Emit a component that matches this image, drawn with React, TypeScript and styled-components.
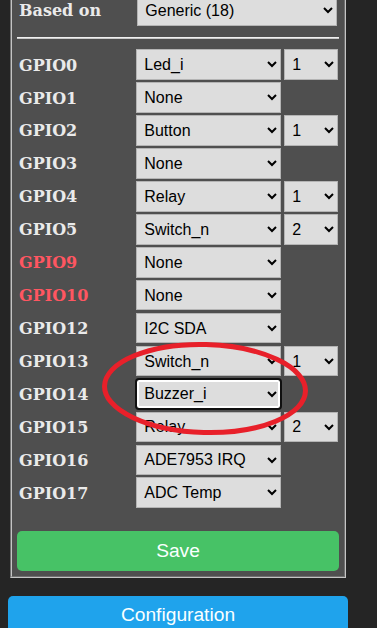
import React from "react";
import styled, { createGlobalStyle } from "styled-components";

const GlobalStyle = createGlobalStyle`
  html, body {
    margin: 0;
    padding: 0;
    background: #252525;
  }
  body {
    font-family: "Liberation Sans", Arial, sans-serif;
    color: #eaeaea;
  }
`;

const Page = styled.div`
  position: relative;
  display: flow-root;
  padding: 0 8px;
  width: 377px;
  height: 628px;
  box-sizing: border-box;
  overflow: hidden;
`;

const Wrapper = styled.div`
  width: 340px;
  margin-top: -8px;
`;

const Fieldset = styled.fieldset`
  margin: 0 2px;
  padding: 1px 5px 5px 5px;
  border: 2px groove #c4c4c4;
  background: #4f4f4f;
  min-width: 0;
`;

const BaseRow = styled.div`
  display: grid;
  grid-template-columns: 120.3px 199.4px;
  height: 31px;
  align-items: center;
`;

const Label = styled.b<{ $warn?: boolean }>`
  font-family: "DejaVu Serif", serif;
  font-weight: bold;
  font-size: 16px;
  padding-left: 2px;
  color: ${(p) => (p.$warn ? "#ff5661" : "#eaeaea")};
  white-space: nowrap;
`;

const Rule = styled.hr`
  margin: 11px 0 10.3px 0;
  height: 0;
  border: none;
  border-top: 1px solid #f0f0f0;
  border-bottom: 1px solid #c8c8c8;
`;

const GpioGrid = styled.div`
  display: grid;
  grid-template-columns: 116.3px 145px 53.4px;
  column-gap: 3px;
  grid-auto-rows: 30.6px;
  row-gap: 2.35px;
  align-items: center;
`;

const LabelCell = styled.div`
  display: flex;
  align-items: center;
  height: 100%;
  padding-top: 1px;
`;

const Select = styled.select<{ $focus?: boolean }>`
  width: 100%;
  height: 100%;
  box-sizing: border-box;
  padding: 4px 4px 4px 3px;
  font-family: "Liberation Sans", Arial, sans-serif;
  font-size: 16px;
  color: #000;
  background: #dddddd;
  border: 1px solid #b4b4b4;
  border-radius: ${(p) => (p.$focus ? "3px" : "0")};
  outline: ${(p) => (p.$focus ? "2px solid #101010" : "none")};
  outline-offset: -1px;
  box-shadow: ${(p) => (p.$focus ? "inset 0 0 0 2px #ffffff" : "none")};
  margin: 0;
`;

const SaveButton = styled.button`
  display: block;
  width: 100%;
  height: 40px;
  margin-top: 22.5px;
  border: 0;
  border-radius: 5px;
  background: #47c266;
  color: #faffff;
  font-family: "Liberation Sans", Arial, sans-serif;
  font-size: 19.2px;
  line-height: 40px;
  padding: 0;
`;

const ConfigButton = styled.button`
  display: block;
  width: 100%;
  height: 38.4px;
  margin-top: 18px;
  border: 0;
  border-radius: 5px;
  background: #1fa3ec;
  color: #faffff;
  font-family: "Liberation Sans", Arial, sans-serif;
  font-size: 19.2px;
  line-height: 38.4px;
  padding: 0;
`;

const Annotation = styled.svg`
  position: absolute;
  left: 0;
  top: 0;
  width: 377px;
  height: 628px;
  pointer-events: none;
`;

type Row = {
  gpio: string;
  fn: string;
  idx?: string;
  warn?: boolean;
  focus?: boolean;
};

const rows: Row[] = [
  { gpio: "GPIO0", fn: "Led_i", idx: "1" },
  { gpio: "GPIO1", fn: "None" },
  { gpio: "GPIO2", fn: "Button", idx: "1" },
  { gpio: "GPIO3", fn: "None" },
  { gpio: "GPIO4", fn: "Relay", idx: "1" },
  { gpio: "GPIO5", fn: "Switch_n", idx: "2" },
  { gpio: "GPIO9", fn: "None", warn: true },
  { gpio: "GPIO10", fn: "None", warn: true },
  { gpio: "GPIO12", fn: "I2C SDA" },
  { gpio: "GPIO13", fn: "Switch_n", idx: "1" },
  { gpio: "GPIO14", fn: "Buzzer_i", focus: true },
  { gpio: "GPIO15", fn: "Relay", idx: "2" },
  { gpio: "GPIO16", fn: "ADE7953 IRQ" },
  { gpio: "GPIO17", fn: "ADC Temp" },
];

const functions = [
  "None",
  "Button",
  "Switch_n",
  "Relay",
  "Led_i",
  "I2C SDA",
  "Buzzer_i",
  "ADE7953 IRQ",
  "ADC Temp",
];

const indices = ["1", "2", "3", "4"];

export default function App() {
  return (
    <>
      <GlobalStyle />
      <Page>
        <Wrapper>
          <Fieldset>
            <BaseRow>
              <Label>Based on</Label>
              <Select defaultValue="Generic (18)">
                <option>Generic (18)</option>
              </Select>
            </BaseRow>
            <Rule />
            <GpioGrid>
              {rows.map((r) => (
                <React.Fragment key={r.gpio}>
                  <LabelCell>
                    <Label $warn={r.warn}>{r.gpio}</Label>
                  </LabelCell>
                  <Select defaultValue={r.fn} $focus={r.focus}>
                    {functions.map((f) => (
                      <option key={f}>{f}</option>
                    ))}
                  </Select>
                  {r.idx ? (
                    <Select defaultValue={r.idx}>
                      {indices.map((i) => (
                        <option key={i}>{i}</option>
                      ))}
                    </Select>
                  ) : (
                    <span />
                  )}
                </React.Fragment>
              ))}
            </GpioGrid>
            <SaveButton>Save</SaveButton>
          </Fieldset>
          <ConfigButton>Configuration</ConfigButton>
        </Wrapper>
        <Annotation viewBox="0 0 377 628">
          <ellipse
            cx="205"
            cy="388.5"
            rx="100.5"
            ry="44"
            fill="none"
            stroke="#e8202a"
            strokeWidth="5"
            transform="rotate(1.5 205 388.5)"
          />
        </Annotation>
      </Page>
    </>
  );
}
